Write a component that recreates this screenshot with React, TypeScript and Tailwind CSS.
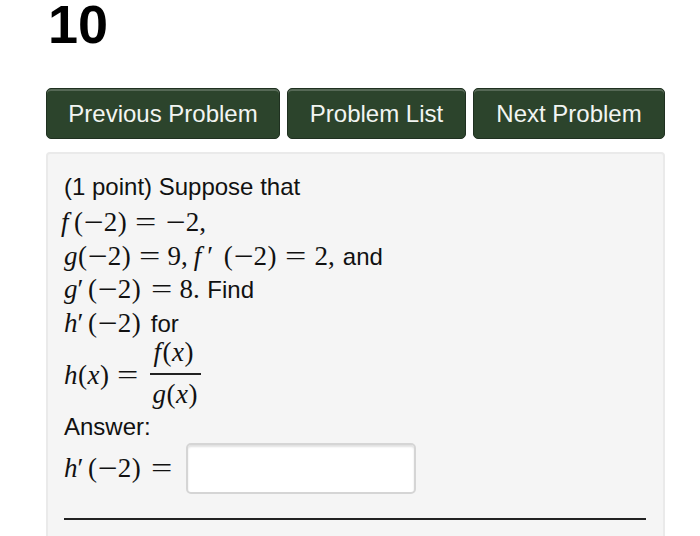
const sans = { fontFamily: '"Liberation Sans", Arial, sans-serif' };

function I({ children, c = "" }: { children: React.ReactNode; c?: string }) {
  return <span className={`italic ${c}`}>{children}</span>;
}

function Math({ children }: { children: React.ReactNode }) {
  return <span className="font-['Liberation_Serif',serif] text-[27px] text-[#111]">{children}</span>;
}

const L = () => <span className="mx-[0.5px]">(</span>;
const R = () => <span className="mx-[0.5px]">)</span>;
const Minus = () => <span className="mx-[2.5px] inline-block scale-x-[1.3]">−</span>;
const Eq = ({ c = "mx-[10.5px]" }: { c?: string }) => <span className={`${c} inline-block scale-x-[1.4]`}>=</span>;
const Comma = ({ c = "mr-[9px]" }: { c?: string }) => <span className={c}>,</span>;
const Prime = ({ c = "mr-[4px]" }: { c?: string }) => <span className={c}>′</span>;

function F({ c = "mr-[1px]" }: { c?: string }) {
  return <I c={`-ml-[3px] ${c} inline-block`}>f</I>;
}

function Arg() {
  return (
    <>
      <L />
      <Minus />2
      <R />
    </>
  );
}

function Btn({ label, w }: { label: string; w: string }) {
  return (
    <button className={`${w} h-[51px] rounded-[5px] border border-[#1f3020] bg-[#2c442c] text-[24px] text-[#f2f5f2] shadow-[inset_0_2px_0_rgba(255,255,255,0.2)]`}>
      {label}
    </button>
  );
}

export default function App() {
  return (
    <div className="h-[536px] w-[700px] overflow-hidden bg-white pl-[46px] font-['Liberation_Sans',Arial,sans-serif] text-[#111]" style={sans}>
      <h1 className="h-[88px] pl-[2px] text-[54px] font-bold leading-[48px] text-black">10</h1>
      <div className="flex gap-[7px]">
        <Btn label="Previous Problem" w="w-[234px]" />
        <Btn label="Problem List" w="w-[179px]" />
        <Btn label="Next Problem" w="w-[192px]" />
      </div>
      <div className="mt-[13px] h-[400px] w-[619px] rounded-[4px] border-2 border-[#eaeaea] bg-[#f5f5f5] pl-[16px] pr-[17px] pt-[16px] text-[24px]">
        <div className="h-[35px] leading-[34px]">(1 point) Suppose that</div>
        <div className="h-[34px] leading-[34px]"><Math><F c="mr-[5px]" /><Arg /><Eq c="ml-[10.5px] mr-[12.5px]" /><Minus />2<Comma /></Math></div>
        <div className="h-[34px] leading-[34px]"><Math><I>g</I><Arg /><Eq />9<Comma /><F c="mr-[6px]" /><Prime c="mr-[10px]" /><Arg /><Eq c="ml-[11px] mr-[11.5px]" />2<Comma c="mr-[8px]" /></Math>and</div>
        <div className="h-[33px] leading-[33px]"><Math><I>g</I><Prime /><Arg /><Eq c="ml-[13px] mr-[10px]" />8.</Math> <span className="ml-[1px]">Find</span></div>
        <div className="h-[34px] leading-[34px]"><Math><I>h</I><Prime /><Arg /></Math> <span className="ml-[3px]">for</span></div>
        <div className="flex h-[70px] items-center">
          <Math><I>h</I><L /><I>x</I><R /><Eq /></Math>
          <div className="ml-[4px] flex w-[51px] flex-col items-center">
            <div className="h-[35px] w-full border-b-2 border-[#222] text-center leading-[24px]"><Math><F /><L /><I>x</I><R /></Math></div>
            <div className="h-[35px] leading-[38px]"><Math><I>g</I><L /><I>x</I><R /></Math></div>
          </div>
        </div>
        <div className="h-[33px] leading-[33px]">Answer:</div>
        <div className="flex h-[50px] items-center">
          <Math><I>h</I><Prime /><Arg /><Eq c="ml-[13px] mr-[10.5px]" /></Math>
          <input className="ml-[6px] h-[51px] w-[230px] rounded-[5px] border-2 border-[#d5d5d5] bg-white shadow-[inset_0_2px_2px_rgba(0,0,0,0.12)]" />
        </div>
        <hr className="mt-[25px] border-t-2 border-[#222]" />
      </div>
    </div>
  );
}
